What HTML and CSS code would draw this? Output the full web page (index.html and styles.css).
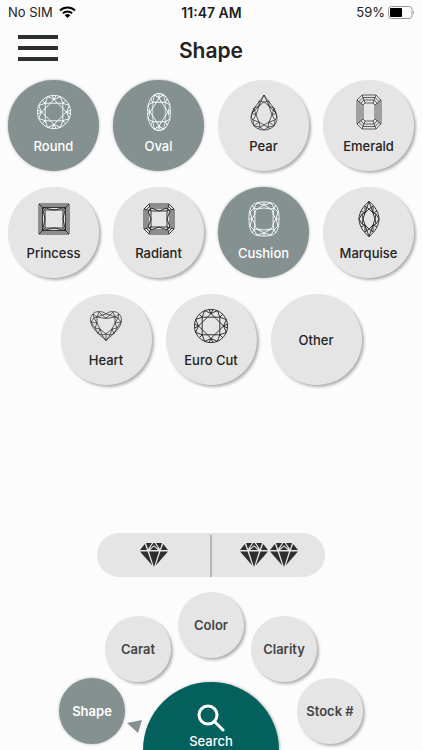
FILE: index.html
```
<!DOCTYPE html>
<html lang="en">
<head>
  <meta charset="UTF-8" />
  <meta name="viewport" content="width=device-width, initial-scale=1.0"/>
  <title>Shape</title>
  <link rel="stylesheet" href="styles.css">
</head>
<body>

  <!-- Gem outlines shared by the buttons -->
  <svg class="sprite" aria-hidden="true">
    <symbol id="brilliant" viewBox="-17 -17 34 34" preserveAspectRatio="none">
      <circle r="16.6"/>
      <path d="M8.800-3.600V3.600L3.600 8.800H-3.600L-8.800 3.600V-3.600L-3.600-8.800H3.600Z"/>
      <path d="M12.500 0L8.800 3.600 8.800 8.800 3.600 8.800 0 12.500-3.600 8.800-8.800 8.800-8.800 3.600-12.500 0-8.800-3.600-8.800-8.800-3.600-8.800 0-12.500 3.600-8.800 8.800-8.800 8.800-3.600Z"/>
      <path d="M12.500 0L15.400 6.400 8.800 8.800 6.400 15.400 0 12.500-6.400 15.400-8.800 8.800-15.400 6.400-12.500 0-15.400-6.400-8.800-8.800-6.400-15.400 0-12.500 6.400-15.400 8.800-8.800 15.400-6.400Z"/>
      <path d="M12.500 0L16.500 2M12.500 0L16.500-2M-12.500 0L-16.500 2M-12.500 0L-16.500-2M0 12.500L2 16.500M0 12.500L-2 16.500M0-12.500L2-16.500M0-12.500L-2-16.500M8.800 8.800L11.800 11.800M-8.800 8.800L-11.800 11.800M8.800-8.800L11.800-11.800M-8.800-8.800L-11.800-11.800"/>
    </symbol>
    <symbol id="diamond" viewBox="0 0 28 24">
      <path d="M6 0H12L8 6ZM13.300 0H14.700L18.500 6 14 2.200 9.500 6ZM16 0H22L20 6ZM4.800 1L7 7H0ZM23.200 1L28 7H21ZM14 3.500L17.800 7H10.200ZM0 8.500H7.500L12.300 22.500ZM9 8.500H19L14 24ZM20.500 8.500H28L15.700 22.500Z"/>
    </symbol>
  </svg>

  <div class="status-bar">
    <div class="status-left">
      <span>No SIM</span>
      <svg class="wifi" viewBox="0 0 17 12">
        <path d="M1 4.500A11 11 0 0 1 16 4.500M3.800 7.300A7 7 0 0 1 13.200 7.300"/>
        <path class="wifi-dot" d="M8.500 12L5.700 9.300A4 4 0 0 1 11.300 9.300Z"/>
      </svg>
    </div>
    <span class="time">11:47 AM</span>
    <div class="status-right">
      <span>59%</span>
      <svg class="battery" viewBox="0 0 27 13">
        <rect class="case" x="0.500" y="0.500" width="23.500" height="12" rx="3"/>
        <rect x="2" y="2" width="12" height="9" rx="1"/>
        <path class="cap" d="M25 4.500Q27 6.500 25 8.500Z"/>
      </svg>
    </div>
  </div>

  <header class="header">
    <button class="menu" aria-label="Menu"><span></span><span></span><span></span></button>
    <h1>Shape</h1>
  </header>

  <main class="shapes">
    <button class="shape active">
      <svg class="gem round"><use href="#brilliant"/></svg>
      <span>Round</span>
    </button>
    <button class="shape active">
      <svg class="gem oval"><use href="#brilliant"/></svg>
      <span>Oval</span>
    </button>
    <button class="shape">
      <svg class="gem" viewBox="-20 -20 40 40">
        <path d="M0-17C4-10 13-3 13 6C13 13 7 18 0 18C-7 18-13 13-13 6C-13-3-4-10 0-17Z"/>
        <path d="M0-10L5-6 8 3 5 10 0 13-5 10-8 3-5-6Z"/>
        <path d="M0-17L-5-6-10-4-8 3-11 8-5 10-4 15 0 13 4 15 5 10 11 8 8 3 10-4 5-6Z"/>
        <path d="M-5-11L0-10 5-11M-5-11L-5-6-12 1-8 3M5-11L5-6 12 1 8 3M-10-4L-13 5-11 8-10 14-4 15 0 18 4 15 10 14 11 8 13 5 10-4M-5 10L-10 14M5 10L10 14M-4 15L-5 17M4 15L5 17"/>
      </svg>
      <span>Pear</span>
    </button>
    <button class="shape">
      <svg class="gem" viewBox="-20 -20 40 40">
        <path d="M-7-17H7L12-12V12L7 17H-7L-12 12V-12Z"/>
        <path d="M-6-14.500H6L10-10.500V10.500L6 14.500H-6L-10 10.500V-10.500Z"/>
        <path d="M-5-12H5L8-9V9L5 12H-5L-8 9V-9Z"/>
        <path d="M-4-9H4L6-7V7L4 9H-4L-6 7V-7Z"/>
        <path d="M-7-17L-4-9M7-17L4-9M-12-12L-6-7M12-12L6-7M-7 17L-4 9M7 17L4 9M-12 12L-6 7M12 12L6 7"/>
      </svg>
      <span>Emerald</span>
    </button>
    <button class="shape">
      <svg class="gem strong" viewBox="-20 -20 40 40">
        <path d="M-15-15H15V15H-15Z"/>
        <path d="M-13-13H13V13H-13ZM-11.500-11.500H11.500V11.500H-11.500Z"/>
        <path d="M-9-9H9V9H-9Z"/>
        <path d="M-15-15L-9-9M15-15L9-9M-15 15L-9 9M15 15L9 9M-11.500-11.500L0-9 11.500-11.500 9 0 11.500 11.500 0 9-11.500 11.500-9 0Z"/>
      </svg>
      <span>Princess</span>
    </button>
    <button class="shape">
      <svg class="gem strong" viewBox="-20 -20 40 40">
        <path d="M-10-15H10L15-10V10L10 15H-10L-15 10V-10Z"/>
        <path d="M-9-13H9L13-9V9L9 13H-9L-13 9V-9Z"/>
        <path d="M-8-11H8L11-8V8L8 11H-8L-11 8V-8Z"/>
        <path d="M-8-8H8V8H-8Z"/>
        <path d="M-10-15L-8-8-15-10M10-15L8-8 15-10M-10 15L-8 8-15 10M10 15L8 8 15 10M-8-11L0-8 8-11M-8 11L0 8 8 11M-11-8L-8 0-11 8M11-8L8 0 11 8"/>
      </svg>
      <span>Radiant</span>
    </button>
    <button class="shape active">
      <svg class="gem" viewBox="-20 -20 40 40">
        <path d="M0-17C11-17 15-14 15 0C15 14 11 17 0 17C-11 17-15 14-15 0C-15-14-11-17 0-17Z"/>
        <path d="M-7-10Q0-12 7-10Q10-8 9 0Q10 8 7 10Q0 12-7 10Q-10 8-9 0Q-10-8-7-10Z"/>
        <path d="M0-14L7-10 10-11 9-5 12 0 9 5 10 11 7 10 0 14-7 10-10 11-9 5-12 0-9-5-10-11-7-10Z"/>
        <path d="M0-14L7-16 10-11 14-7 12 0 14 7 10 11 7 16 0 14-7 16-10 11-14 7-12 0-14-7-10-11-7-16Z"/>
        <path d="M0-17V-14M0 17V14M-15 0H-12M15 0H12M-10-11L-12-14M10-11L12-14M-10 11L-12 14M10 11L12 14"/>
      </svg>
      <span>Cushion</span>
    </button>
    <button class="shape">
      <svg class="gem strong" viewBox="-20 -20 40 40">
        <path d="M0-17.500C6-13 10-6 10 0C10 6 6 13 0 17.500C-6 13-10 6-10 0C-10-6-6-13 0-17.500Z"/>
        <path d="M0-10L4-6 6 0 4 6 0 10-4 6-6 0-4-6Z"/>
        <path d="M0-17.500L4-6 7-5 6 0 7 5 4 6 0 17.500-4 6-7 5-6 0-7-5-4-6Z"/>
        <path d="M-4-13L0-10 4-13M-4 13L0 10 4 13M-4-13L-4-6-8-8M4-13L4-6 8-8M-4 13L-4 6-8 8M4 13L4 6 8 8M-7-5L-10 0-7 5M7-5L10 0 7 5"/>
      </svg>
      <span>Marquise</span>
    </button>
    <button class="shape">
      <svg class="gem" viewBox="-20 -20 40 40">
        <path d="M0-12C4-16 15-16 15.500-6C15.500 2 7 8 0 14.500C-7 8-15.500 2-15.500-6C-15-16-4-16 0-12Z"/>
        <path d="M-9-9Q0-6 9-9L9-3 6 3 0 8-6 3-9-3Z"/>
        <path d="M0-12L-4-11-9-9-12-8-9-3-11 2-6 3-4 9 0 8 4 9 6 3 11 2 9-3 12-8 9-9 4-11Z"/>
        <path d="M-7-14L-4-11 0-8 4-11 7-14 9-9 13-12 12-8 15-4 9-3M-7-14L-9-9-13-12-12-8-15-4-9-3M-15-4L-11 2-8 7.500-6 3M15-4L11 2 8 7.500 6 3M-8 7.500L-4 9 0 14.500 4 9 8 7.500M0 8V14.500"/>
      </svg>
      <span>Heart</span>
    </button>
    <button class="shape">
      <svg class="gem round strong"><use href="#brilliant"/></svg>
      <span>Euro Cut</span>
    </button>
    <button class="shape">
      <span>Other</span>
    </button>
  </main>

  <div class="toggle">
    <button aria-label="Single stone">
      <svg class="diamond"><use href="#diamond"/></svg>
    </button>
    <button aria-label="Pair of stones">
      <svg class="diamond"><use href="#diamond"/></svg>
      <svg class="diamond"><use href="#diamond"/></svg>
    </button>
  </div>

  <nav class="dial">
    <div class="dial-row top">
      <button class="dial-item">Color</button>
    </div>
    <div class="dial-row middle">
      <button class="dial-item">Carat</button>
      <button class="dial-item">Clarity</button>
    </div>
    <div class="dial-row bottom">
      <button class="dial-item active">Shape</button>
      <svg class="pointer" viewBox="0 0 15 13"><path d="M0 3L15 0 11 13Z"/></svg>
      <button class="search">
        <svg viewBox="0 0 28 28"><circle cx="11" cy="11" r="9"/><path d="M17.500 17.500L26 26"/></svg>
        <span>Search</span>
      </button>
      <button class="dial-item">Stock #</button>
    </div>
  </nav>

</body>
</html>
```
FILE: styles.css
```
* {
  box-sizing: border-box;
}

body {
  font-family: Inter, "Liberation Sans", sans-serif;
  display: flex;
  flex-direction: column;
  min-height: 100vh;
  margin: 0;
  background-color: #fcfcfc;
  color: #222;
}

button {
  padding: 0;
  border: none;
  font-family: inherit;
  color: inherit;
  cursor: pointer;
}

.sprite {
  position: absolute;
  width: 0;
  height: 0;
}

/* Status bar */
.status-bar {
  display: grid;
  grid-template-columns: 1fr auto 1fr;
  align-items: center;
  height: 24px;
  padding: 0 7px 0 8px;
  font-size: 13px;
}

.status-left,
.status-right {
  display: flex;
  align-items: center;
  gap: 6px;
}

.status-right {
  justify-content: flex-end;
  gap: 3px;
}

.time {
  font-size: 14px;
  font-weight: 600;
}

.wifi {
  width: 17px;
  height: 12px;
  fill: none;
  stroke: #000;
  stroke-width: 2;
}

.wifi-dot {
  fill: #000;
  stroke: none;
}

.battery {
  width: 27px;
  height: 13px;
}

.battery .case {
  fill: none;
  stroke: #999;
}

.battery .cap {
  fill: #999;
}

/* Header */
.header {
  display: grid;
  grid-template-columns: 1fr auto 1fr;
  align-items: center;
  height: 56px;
  padding: 0 18px 2px;
}

.header h1 {
  margin: 0;
  font-size: 21px;
  font-weight: 600;
  line-height: 28px;
}

.menu {
  display: flex;
  flex-direction: column;
  gap: 7px;
  width: 40px;
  margin-bottom: 7px;
  background: none;
}

.menu span {
  height: 4px;
  background-color: #2b2f2d;
}

/* Shape buttons */
.shapes {
  display: flex;
  flex-wrap: wrap;
  justify-content: center;
  gap: 16px 14px;
  width: 100%;
  max-width: 440px;
  margin: 0 auto;
  padding: 0 8px 24px;
}

.shape,
.dial-item {
  border-radius: 50%;
  background-color: #e5e5e5;
  box-shadow: 2px 2px 3px rgba(0, 0, 0, 0.3);
}

.shape {
  display: flex;
  flex-direction: column;
  align-items: center;
  justify-content: center;
  width: 91px;
  height: 91px;
  font-size: 13px;
  font-weight: 500;
  line-height: 18px;
}

.shape.active,
.dial-item.active {
  background-color: #849190;
  color: #fff;
  box-shadow: 0 0 3px rgba(0, 0, 0, 0.3);
}

.gem {
  width: 40px;
  height: 40px;
  margin: -5px 0 5px;
  fill: none;
  stroke: currentColor;
  stroke-width: 0.7;
  overflow: visible;
}

.gem.strong,
.active .gem {
  stroke-width: 0.9;
}

.gem.round {
  width: 34px;
  height: 34px;
  margin: -2px 0 8px;
}

.gem.oval {
  width: 24px;
  height: 38px;
  margin: -4px 0 6px;
}

/* Single / pair switch */
.toggle {
  display: flex;
  width: 228px;
  height: 44px;
  margin: auto auto 15px;
  border-radius: 22px;
  overflow: hidden;
  background-color: #e5e5e5;
  flex-shrink: 0;
}

.toggle button {
  display: flex;
  flex: 1;
  align-items: center;
  justify-content: center;
  gap: 2px;
  background: none;
}

.toggle button + button {
  margin-top: 2px;
  padding-bottom: 2px;
  border-left: 2px solid #b5b5b5;
}

.diamond {
  width: 28px;
  height: 24px;
  fill: #2e2e2e;
}

/* Dial */
.dial {
  width: 304px;
  margin: 0 auto;
}

.dial-row {
  display: flex;
  justify-content: center;
}

.dial-item {
  width: 66px;
  height: 66px;
  font-size: 13px;
  font-weight: 600;
  color: #444;
}

.dial-row.middle {
  gap: 80px;
  margin-top: -42px;
}

.dial-row.bottom {
  position: relative;
  justify-content: space-between;
  margin-top: -4px;
}

.pointer {
  position: absolute;
  left: 68px;
  top: 42px;
  width: 15px;
  height: 13px;
  fill: #849190;
}

.search {
  display: flex;
  flex-direction: column;
  align-items: center;
  justify-content: flex-end;
  width: 136px;
  height: 68px;
  margin-top: 4px;
  border-radius: 68px 68px 0 0;
  background-color: #04605d;
  color: #fff;
  font-size: 13px;
  font-weight: 500;
  line-height: 18px;
  box-shadow: 1px 0 3px rgba(0, 0, 0, 0.3);
}

.search svg {
  width: 28px;
  height: 28px;
  fill: none;
  stroke: #fff;
  stroke-width: 3;
  stroke-linecap: round;
}
```
